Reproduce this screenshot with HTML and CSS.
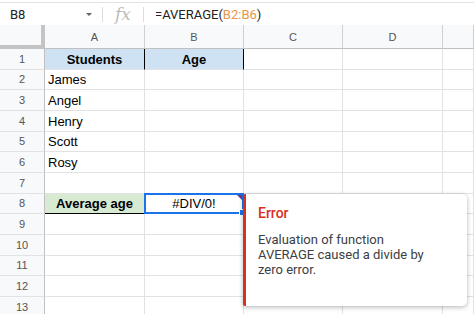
FILE: index.html
```html
<!DOCTYPE html>
<html lang="en">
<head>
  <meta charset="UTF-8">
  <meta name="viewport" content="width=device-width, initial-scale=1.0">
  <title>Sheet</title>
  <link rel="stylesheet" href="styles.css">
</head>
<body>
  <div class="formula-bar">
    <div class="name-box">
      <span class="cell-ref">B8</span>
      <span class="caret"></span>
    </div>
    <div class="sep"></div>
    <div class="fx">fx</div>
    <div class="sep"></div>
    <div class="formula">=AVERAGE(<span class="ref">B2:B6</span>)</div>
  </div>

  <div class="sheet">
    <div class="grid">
      <div class="corner"></div>
      <div class="col-head">A</div>
      <div class="col-head">B</div>
      <div class="col-head">C</div>
      <div class="col-head">D</div>
      <div class="col-head"></div>

      <div class="row-head">1</div>
      <div class="cell head-cell">Students</div>
      <div class="cell head-cell">Age</div>
      <div class="cell"></div><div class="cell"></div><div class="cell"></div>

      <div class="row-head">2</div>
      <div class="cell">James</div>
      <div class="cell"></div><div class="cell"></div><div class="cell"></div><div class="cell"></div>

      <div class="row-head">3</div>
      <div class="cell">Angel</div>
      <div class="cell"></div><div class="cell"></div><div class="cell"></div><div class="cell"></div>

      <div class="row-head">4</div>
      <div class="cell">Henry</div>
      <div class="cell"></div><div class="cell"></div><div class="cell"></div><div class="cell"></div>

      <div class="row-head">5</div>
      <div class="cell">Scott</div>
      <div class="cell"></div><div class="cell"></div><div class="cell"></div><div class="cell"></div>

      <div class="row-head">6</div>
      <div class="cell">Rosy</div>
      <div class="cell"></div><div class="cell"></div><div class="cell"></div><div class="cell"></div>

      <div class="row-head">7</div>
      <div class="cell"></div><div class="cell"></div><div class="cell"></div><div class="cell"></div><div class="cell"></div>

      <div class="row-head">8</div>
      <div class="cell avg-label">Average age</div>
      <div class="cell selected">#DIV/0!<span class="err-mark"></span><span class="handle"></span></div>
      <div class="cell"></div><div class="cell"></div><div class="cell"></div>

      <div class="row-head">9</div>
      <div class="cell"></div><div class="cell"></div><div class="cell"></div><div class="cell"></div><div class="cell"></div>

      <div class="row-head">10</div>
      <div class="cell"></div><div class="cell"></div><div class="cell"></div><div class="cell"></div><div class="cell"></div>

      <div class="row-head">11</div>
      <div class="cell"></div><div class="cell"></div><div class="cell"></div><div class="cell"></div><div class="cell"></div>

      <div class="row-head">12</div>
      <div class="cell"></div><div class="cell"></div><div class="cell"></div><div class="cell"></div><div class="cell"></div>

      <div class="row-head">13</div>
      <div class="cell"></div><div class="cell"></div><div class="cell"></div><div class="cell"></div><div class="cell"></div>
    </div>

    <div class="error-pop">
      <div class="error-title">Error</div>
      <div class="error-text">Evaluation of function AVERAGE caused a divide by zero error.</div>
    </div>
  </div>
</body>
</html>
```

FILE: styles.css
```css
html, body {
  margin: 0;
  padding: 0;
}

body {
  width: 474px;
  height: 314px;
  overflow: hidden;
  background: #fff;
  font-family: "Liberation Sans", Arial, sans-serif;
}

/* formula bar */
.formula-bar {
  display: flex;
  align-items: center;
  margin-top: 2px;
  height: 23px;
  border-top: 1px solid #e3e3e3;
  box-sizing: border-box;
}
.name-box {
  display: flex;
  align-items: center;
  width: 102px;
  padding-left: 10px;
  box-sizing: border-box;
}
.cell-ref {
  flex: 1;
  font-family: Roboto, sans-serif;
  font-size: 13px;
  color: #222;
}
.caret {
  width: 0;
  height: 0;
  margin-right: 10px;
  border-left: 3px solid transparent;
  border-right: 3px solid transparent;
  border-top: 3px solid #666;
}
.sep {
  width: 1px;
  height: 15px;
  background: #dadce0;
}
.fx {
  width: 40px;
  text-align: center;
  font-family: "DejaVu Serif", serif;
  font-style: italic;
  font-size: 17px;
  color: #bbb;
  line-height: 20px;
}
.formula {
  padding-left: 11px;
  font-family: Roboto, sans-serif;
  font-size: 13px;
  color: #222;
}
.formula .ref {
  color: #e8954a;
}

/* grid */
.sheet {
  position: relative;
}
.grid {
  display: grid;
  grid-template-columns: 45px 100px 99px 99px 100px 1fr;
  grid-template-rows: 24px repeat(13, 20.67px);
}
.grid > div {
  box-sizing: border-box;
}
.corner {
  background: #f8f9fa;
  border-right: 4px solid #c4c4c4;
  border-bottom: 4px solid #c4c4c4;
}
.col-head {
  display: flex;
  align-items: center;
  justify-content: center;
  background: #f8f9fa;
  border-right: 1px solid #d0d0d0;
  border-bottom: 1px solid #c0c0c0;
  font-size: 11px;
  color: #555;
}
.row-head {
  display: flex;
  align-items: center;
  justify-content: center;
  background: #f8f9fa;
  border-right: 1px solid #c0c0c0;
  border-bottom: 1px solid #e2e2e2;
  font-size: 11px;
  color: #555;
}
.cell {
  display: flex;
  align-items: center;
  padding: 1px 3px 0;
  border-right: 1px solid #e2e2e2;
  border-bottom: 1px solid #e2e2e2;
  font-size: 13px;
  color: #000;
  white-space: nowrap;
}
.head-cell {
  justify-content: center;
  background: #cfe2f3;
  border-right: 1px solid #000;
  font-weight: bold;
}
.avg-label {
  justify-content: center;
  background: #d9ead3;
  border-bottom: 1px solid #000;
  font-weight: bold;
}
.selected {
  position: relative;
  justify-content: center;
  border: 2px solid #1a73e8;
  margin-left: -1px;
  margin-top: -1px;
}
.err-mark {
  position: absolute;
  top: 0;
  right: 0;
  width: 0;
  height: 0;
  border-left: 5px solid transparent;
  border-top: 5px solid #6a3b8a;
}
.handle {
  position: absolute;
  right: -4px;
  bottom: -4px;
  width: 5px;
  height: 5px;
  background: #1a73e8;
  border: 1px solid #fff;
}

/* error popup */
.error-pop {
  position: absolute;
  left: 243px;
  top: 169px;
  width: 224px;
  height: 112px;
  padding: 11px 12px 0 12px;
  box-sizing: border-box;
  background: #fff;
  border-left: 3px solid #d93025;
  border-radius: 2px 5px 5px 2px;
  box-shadow: 0 1px 4px rgba(0,0,0,.22), 0 2px 6px rgba(0,0,0,.08);
  font-family: Roboto, sans-serif;
}
.error-title {
  font-size: 14px;
  font-weight: 500;
  color: #d93025;
  line-height: 16px;
}
.error-text {
  max-width: 172px;
  margin-top: 11px;
  font-size: 13px;
  line-height: 15px;
  color: #3c4043;
}
```
